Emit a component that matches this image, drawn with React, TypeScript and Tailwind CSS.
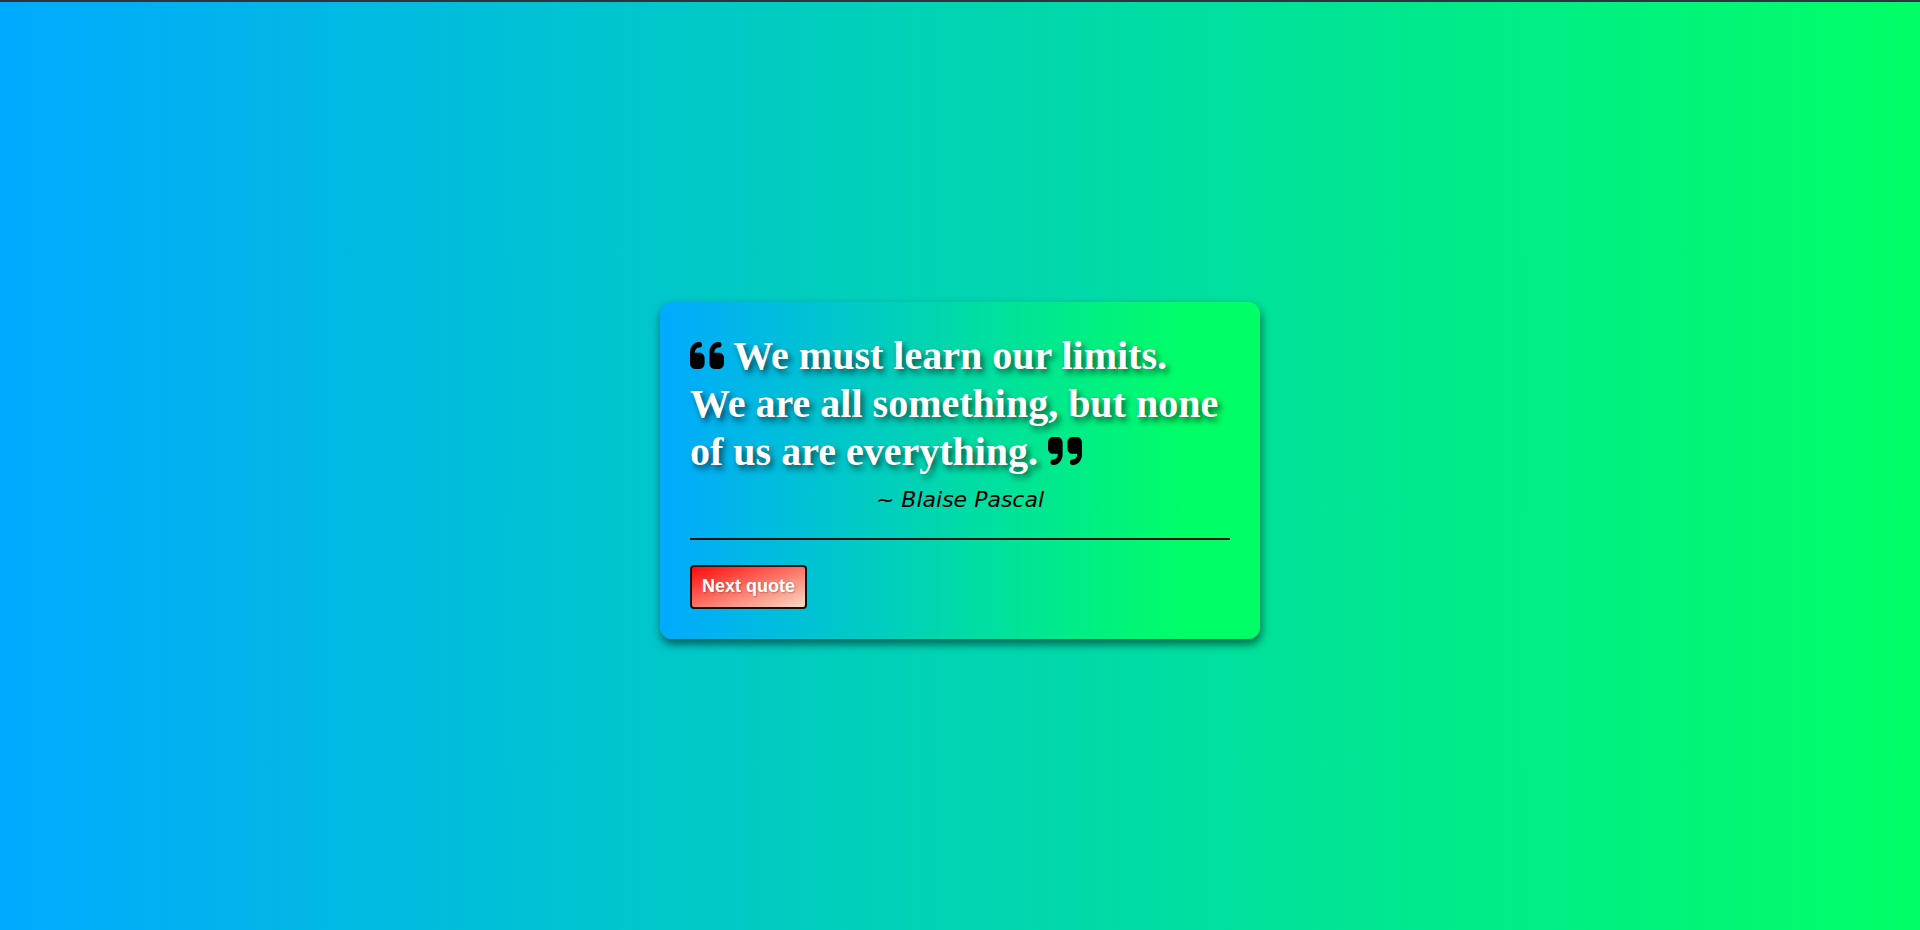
import React from 'react';

const quote = {
  text: 'We must learn our limits. We are all something, but none of us are everything.',
  author: 'Blaise Pascal',
};

// Guillemets façon Font Awesome 6, recadrés sur le glyphe
const QuoteLeft = () => (
  <svg viewBox="0 96 448 320" width="34" height="27" preserveAspectRatio="none" className="inline-block align-baseline fill-black">
    <path d="M0 216C0 149.7 53.7 96 120 96h8c17.7 0 32 14.3 32 32s-14.3 32-32 32h-8c-30.9 0-56 25.1-56 56v8h64c35.3 0 64 28.7 64 64v64c0 35.3-28.7 64-64 64H64c-35.3 0-64-28.7-64-64V320 288 216zm256 0c0-66.3 53.7-120 120-120h8c17.7 0 32 14.3 32 32s-14.3 32-32 32h-8c-30.9 0-56 25.1-56 56v8h64c35.3 0 64 28.7 64 64v64c0 35.3-28.7 64-64 64H320c-35.3 0-64-28.7-64-64V320 288 216z" />
  </svg>
);

const QuoteRight = () => (
  <svg viewBox="0 96 448 320" width="34" height="28" preserveAspectRatio="none" className="inline-block align-baseline fill-black">
    <path d="M448 296c0 66.3-53.7 120-120 120h-8c-17.7 0-32-14.3-32-32s14.3-32 32-32h8c30.9 0 56-25.1 56-56v-8H320c-35.3 0-64-28.7-64-64V160c0-35.3 28.7-64 64-64h64c35.3 0 64 28.7 64 64v32 32 72zm-256 0c0 66.3-53.7 120-120 120h-8c-17.7 0-32-14.3-32-32s14.3-32 32-32h8c30.9 0 56-25.1 56-56v-8H64c-35.3 0-64-28.7-64-64V160c0-35.3 28.7-64 64-64h64c35.3 0 64 28.7 64 64v32 32 72z" />
  </svg>
);

const App = () => {
  return (
    <div className="h-[930px] border-t-2 border-[#2a3540] bg-[linear-gradient(to_right,#00aaff,#00ff66)] flex items-center justify-center pt-2">
      {/* Carte de la citation */}
      <div className="w-[600px] rounded-[12px] p-[30px] bg-[linear-gradient(to_right,#00aaff,#00ff66_88%)] shadow-[1px_5px_10px_rgba(0,0,0,0.55)]">
        <p className="font-['Liberation_Serif','Times_New_Roman',serif] font-bold text-[40px] leading-[48px] text-white [text-shadow:3px_4px_6px_rgba(0,0,0,0.6)]">
          <QuoteLeft />{' '}
          {quote.text}{' '}
          <QuoteRight />
        </p>

        <p className="mt-[7px] text-center font-['Comic_Sans_MS','DejaVu_Sans',sans-serif] italic text-[22px] leading-[33px] text-black">
          ~ {quote.author}
        </p>

        <hr className="mt-[22px] border-0 h-[2px] bg-[#111]" />

        <button className="mt-[25px] h-[44px] px-[10px] rounded-[4px] border-2 border-[#111] bg-[linear-gradient(to_bottom_right,#ff0a0a,#f9dcc4)] font-['Liberation_Sans',Arial,sans-serif] font-bold text-[18px] text-white [text-shadow:1px_1px_2px_rgba(0,0,0,0.25)]">
          Next quote
        </button>
      </div>
    </div>
  );
};

export default App;
